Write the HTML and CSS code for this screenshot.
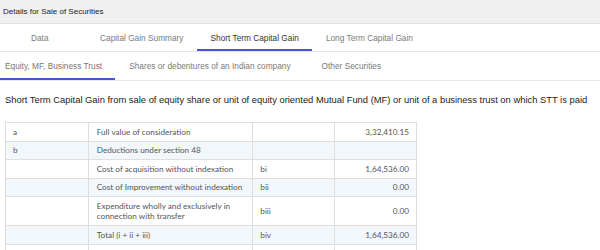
FILE: index.html
```html
<!DOCTYPE html>
<html>
<head>
<meta charset="utf-8">
<link rel="stylesheet" href="styles.css">
</head>
<body>
<div class="panel">
  <div class="panel-head">Details for Sale of Securities</div>
  <div class="tabs tabs-main">
    <div class="tab tab-first">Data</div>
    <div class="tab">Capital Gain Summary</div>
    <div class="tab active">Short Term Capital Gain</div>
    <div class="tab">Long Term Capital Gain</div>
  </div>
  <div class="tabs tabs-sub">
    <div class="tab sub-first active">Equity, MF, Business Trust</div>
    <div class="tab">Shares or debentures of an Indian company</div>
    <div class="tab tab-other">Other Securities</div>
  </div>
  <div class="content">
    <h2 class="section-title">Short Term Capital Gain from sale of equity share or unit of equity oriented Mutual Fund (MF) or unit of a business trust on which STT is paid</h2>
    <table class="cg-table">
      <colgroup>
        <col class="c1"><col class="c2"><col class="c3"><col class="c4">
      </colgroup>
      <tr><td>a</td><td>Full value of consideration</td><td></td><td class="num">3,32,410.15</td></tr>
      <tr class="alt"><td>b</td><td>Deductions under section 48</td><td></td><td class="num"></td></tr>
      <tr><td></td><td>Cost of acquisition without indexation</td><td>bi</td><td class="num">1,64,536.00</td></tr>
      <tr class="alt"><td></td><td>Cost of Improvement without indexation</td><td>bii</td><td class="num">0.00</td></tr>
      <tr><td></td><td>Expenditure wholly and exclusively in connection with transfer</td><td>biii</td><td class="num">0.00</td></tr>
      <tr class="alt"><td></td><td>Total (i + ii + iii)</td><td>biv</td><td class="num">1,64,536.00</td></tr>
      <tr><td></td><td></td><td></td><td class="num"></td></tr>
    </table>
  </div>
</div>
</body>
</html>
```
FILE: styles.css
```css
html, body {
  margin: 0;
  padding: 0;
  background: #ffffff;
  overflow: hidden;
}
body {
  font-family: "Liberation Sans", Arial, sans-serif;
  color: #333;
}
.panel-head {
  height: 23px;
  line-height: 23px;
  background: #f0f0f0;
  border-bottom: 1px solid #e2e2e2;
  padding-left: 3px;
  font-size: 8px;
  color: #222;
}
.tabs {
  display: flex;
  border-bottom: 1px solid #e6e6e6;
}
.tab {
  padding: 0 13.5px;
  font-size: 8.3px;
  color: #7a7a7a;
  white-space: nowrap;
  border-bottom: 2px solid transparent;
}
.tabs-main .tab {
  height: 25px;
  line-height: 28px;
}
.tabs-main .tab-first {
  padding: 0 38px 0 31px;
}
.tab.active {
  color: #333;
  border-bottom-color: #4452dc;
}
.tabs-sub .tab {
  height: 26px;
  line-height: 29px;
  padding: 0 14px;
}
.tabs-sub .sub-first {
  padding: 0 13px 0 5px;
  color: #777;
}
.tabs-sub .tab-other {
  padding-left: 17px;
}
.content {
  padding: 0 5px;
}
.section-title {
  margin: 0;
  padding-top: 13px;
  height: 28px;
  line-height: 12px;
  font-size: 9.4px;
  font-weight: normal;
  color: #222;
  white-space: nowrap;
}
.cg-table {
  border-collapse: collapse;
  width: 412px;
  font-family: "Lato", "Open Sans", sans-serif;
  font-size: 8.2px;
  color: #555;
}
.c1 { width: 83px; }
.c2 { width: 165px; }
.c3 { width: 82px; }
.c4 { width: 82px; }
.cg-table td {
  border: 1px solid #dedede;
  padding: 3.5px 7px;
  line-height: 10.5px;
  height: 10.5px;
  vertical-align: middle;
}
.cg-table td:nth-child(2) {
  padding-left: 8px;
}
.cg-table tr.alt td {
  background: #f2f7fc;
}
.cg-table td.num {
  text-align: right;
}
```
